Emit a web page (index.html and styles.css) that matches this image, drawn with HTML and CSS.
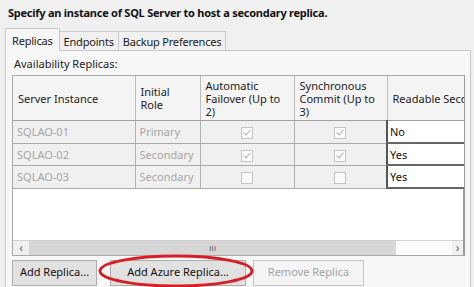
FILE: index.html
```html
<!DOCTYPE html>
<html>
<head>
<meta charset="utf-8">
<link rel="stylesheet" href="styles.css">
</head>
<body>
<div class="page">
  <div class="title">Specify an instance of SQL Server to host a secondary replica.</div>
  <div class="tabs">
    <div class="tab active">Replicas</div>
    <div class="tab">Endpoints</div>
    <div class="tab">Backup Preferences</div>
  </div>
  <div class="panel">
    <div class="label">Availability Replicas:</div>
    <div class="grid">
      <table class="tbl">
        <colgroup>
          <col class="c1"><col class="c2"><col class="c3"><col class="c4"><col class="c5">
        </colgroup>
        <thead>
          <tr>
            <th>Server Instance</th>
            <th>Initial Role</th>
            <th>Automatic Failover (Up to 2)</th>
            <th>Synchronous Commit (Up to 3)</th>
            <th class="clip">Readable Secondary</th>
          </tr>
        </thead>
        <tbody>
          <tr class="r1">
            <td>SQLAO-01</td><td>Primary</td>
            <td class="ck"><span class="box on"></span></td>
            <td class="ck"><span class="box on"></span></td>
            <td class="ro">No</td>
          </tr>
          <tr class="r2">
            <td>SQLAO-02</td><td>Secondary</td>
            <td class="ck"><span class="box on"></span></td>
            <td class="ck"><span class="box on"></span></td>
            <td class="ro">Yes</td>
          </tr>
          <tr class="r3">
            <td>SQLAO-03</td><td>Secondary</td>
            <td class="ck"><span class="box"></span></td>
            <td class="ck"><span class="box"></span></td>
            <td class="ro">Yes</td>
          </tr>
        </tbody>
      </table>
      <div class="filler"></div>
      <div class="hscroll">
        <div class="sbtn left">&lsaquo;</div>
        <div class="thumb"><span class="grip">III</span></div>
        <div class="track"></div>
        <div class="sbtn right">&rsaquo;</div>
      </div>
    </div>
    <div class="buttons">
      <div class="btn b1">Add Replica...</div>
      <div class="btn b2">Add Azure Replica...</div>
      <div class="btn b3 disabled">Remove Replica</div>
    </div>
  </div>
  <svg class="circle" width="170" height="50" viewBox="0 0 170 50">
    <ellipse cx="85" cy="26" rx="76" ry="15" fill="none" stroke="#d81e25" stroke-width="3"/>
  </svg>
</div>
</body>
</html>
```

FILE: styles.css
```css
html, body {
  margin: 0;
  padding: 0;
}
body {
  background: #f0f0f0;
  font-family: "Noto Sans", "Open Sans", sans-serif;
  font-size: 11px;
  color: #1a1a1a;
  width: 474px;
  height: 287px;
  overflow: hidden;
}
.page {
  position: relative;
  width: 474px;
  height: 287px;
}
.title {
  padding: 5px 0 0 8px;
  height: 19px;
  font-weight: bold;
  font-size: 11px;
  line-height: 15px;
  letter-spacing: -0.25px;
  color: #111;
}
.tabs {
  display: flex;
  margin-left: 5px;
  height: 26px;
  align-items: flex-end;
}
.tab {
  border: 1px solid #c8c8c8;
  border-bottom: none;
  background: #f0f0f0;
  height: 19px;
  line-height: 19px;
  padding: 0 4px;
  margin-right: -1px;
  box-sizing: border-box;
  letter-spacing: -0.2px;
}
.tab.active {
  line-height: 24px;
  background: #f7f7f7;
  padding: 0 6px;
  position: relative;
  z-index: 2;
  margin-bottom: -1px;
  height: 23px;
}
.panel {
  margin-left: 5px;
  width: 466px;
  height: 260px;
  border: 1px solid #c8c8c8;
  background: #f7f7f7;
  box-sizing: border-box;
  padding: 4px 0 0 6px;
  position: relative;
  z-index: 1;
}
.label {
  height: 20px;
  line-height: 18px;
  padding-left: 2px;
  color: #222;
}
.grid {
  width: 453px;
  height: 181px;
  border: 1px solid #a8a8a8;
  border-right-width: 2px;
  border-right-color: #9a9a9a;
  background: #ffffff;
  box-sizing: border-box;
  display: flex;
  flex-direction: column;
}
.tbl {
  border-collapse: collapse;
  table-layout: fixed;
  width: 451px;
}
.c1 { width: 122px; }
.c2 { width: 65px; }
.c3 { width: 94px; }
.c4 { width: 93px; }
.c5 { width: 77px; }
.tbl th {
  height: 44px;
  background: #f4f4f4;
  font-weight: normal;
  text-align: left;
  vertical-align: middle;
  padding: 0 5px;
  line-height: 13px;
  border-right: 1px solid #bdbdbd;
  border-bottom: 1px solid #a0a0a0;
  color: #222;
  white-space: normal;
}
.tbl th.clip {
  white-space: nowrap;
  overflow: hidden;
  border-right: none;
}
.tbl td {
  background: #f0f0f0;
  color: #a6a6a6;
  padding: 0 4px;
  border-right: 1px solid #b0b0b0;
  border-bottom: 1px solid #a8a8a8;
  white-space: nowrap;
  overflow: hidden;
}
.r1 td { height: 21px; }
.r2 td { height: 20px; }
.r3 td { height: 21px; }
.tbl td.ck {
  text-align: center;
  padding: 0;
}
.tbl td.ro {
  background: #ffffff;
  color: #111;
  border-left: 2px solid #555;
  border-bottom: 2px solid #666;
  border-right: none;
  padding: 0 2px;
}
.box {
  display: inline-block;
  width: 10px;
  height: 10px;
  border: 1px solid #c4c4c4;
  background: #fafafa;
  vertical-align: middle;
  position: relative;
}
.box.on::after {
  content: "";
  position: absolute;
  left: 3px;
  top: 0px;
  width: 3px;
  height: 6px;
  border-right: 1.5px solid #b4b4b4;
  border-bottom: 1.5px solid #b4b4b4;
  transform: rotate(40deg);
}
.filler {
  flex: 1;
}
.hscroll {
  height: 14px;
  display: flex;
  background: #f0f0f0;
  border-top: 1px solid #d0d0d0;
}
.sbtn {
  width: 16px;
  text-align: center;
  line-height: 13px;
  font-size: 12px;
  color: #606060;
  background: #f0f0f0;
}
.sbtn.right {
  width: 11px;
}
.thumb {
  width: 367px;
  background: #d6d6d6;
  display: flex;
  justify-content: center;
  align-items: center;
}
.grip {
  font-size: 8px;
  letter-spacing: 0;
  color: #666;
  font-family: "DejaVu Sans", sans-serif;
  transform: scaleY(0.9);
}
.track {
  flex: 1;
  background: #fbfbfb;
}
.buttons {
  display: flex;
  margin-top: 4px;
}
.btn {
  height: 26px;
  line-height: 22px;
  text-align: center;
  border: 1px solid #adadad;
  background: #e1e1e1;
  box-sizing: border-box;
  color: #111;
}
.b1 { width: 85px; }
.b2 { width: 136px; margin-left: 13px; }
.b3 { width: 111px; margin-left: 7px; }
.btn.disabled {
  background: #f4f4f4;
  border-color: #c6c6c6;
  color: #a4a4a4;
}
.circle {
  position: absolute;
  left: 91px;
  top: 245px;
  z-index: 5;
}
```
